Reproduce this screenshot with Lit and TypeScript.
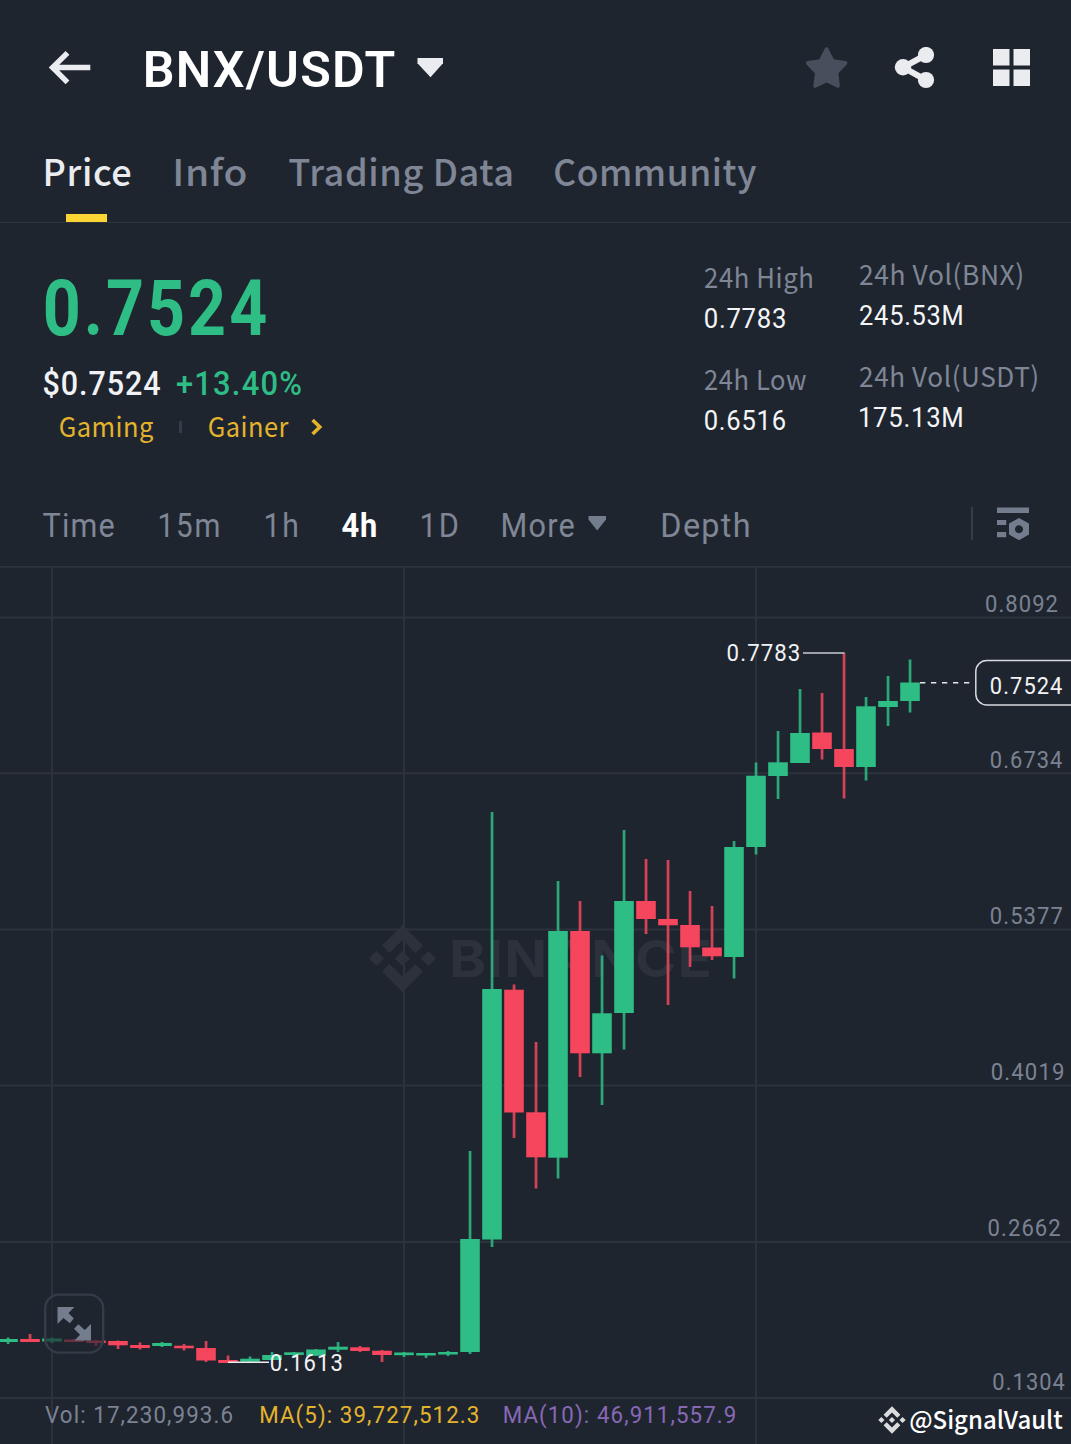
import { LitElement, html, svg, css } from "lit";
import { customElement, property } from "lit/decorators.js";

const FONT = 'Roboto, "Noto Sans", sans-serif';
const HUMANIST = '"Noto Sans CJK SC", "Noto Sans", sans-serif';
const pen = document.createElement("canvas").getContext("2d") as any;

/** Ink extent of a string: distance left of the origin, and full ink width. */
function inkOf(text: string, size: number, weight: number, spacing: number, family = FONT) {
  /* measured at ten times the size, for sub-pixel precision */
  pen.font = `${weight} ${size * 10}px ${family}`;
  pen.letterSpacing = `${spacing * 10}px`;
  const m = pen.measureText(text);
  return {
    left: m.actualBoundingBoxLeft / 10,
    width: (m.actualBoundingBoxLeft + m.actualBoundingBoxRight) / 10,
  };
}

/** A word whose ink spans the given width, less a hair of antialiasing at each side. */
@customElement("fit-text")
class FitText extends LitElement {
  @property() text = "";
  @property() family = FONT;
  @property({ type: Number }) w = 0;
  @property({ type: Number }) size = 28;
  @property({ type: Number }) weight = 400;
  @property({ type: Number }) spacing = 0;
  @property({ type: Number }) rise = 0;

  static styles = css`
    :host { display: flex; flex: none; white-space: pre; }
    .ink { display: block; flex: none; transform-origin: 0 50%; }
  `;

  render() {
    const i = inkOf(this.text, this.size, this.weight, this.spacing, this.family);
    const k = (this.w - 1.5) / i.width;
    return html`<style>:host{width:${this.w}px}</style><span
      class="ink"
      style="font-family:${this.family};font-size:${this.size}px;font-weight:${this.weight};letter-spacing:${this.spacing}px;transform:translate(${i.left * k + 0.9}px,${-this.rise}px) scaleX(${k})"
      >${this.text}</span>`;
  }
}

type Candle = [number, number, number, number, number, 0 | 1];

/* x, high, body top, body bottom, low, rising */
const CANDLES: Candle[] = [
  [8, 1337.5, 1339, 1342, 1344, 1],
  [30, 1334, 1339, 1342, 1342, 0],
  [52, 1337.5, 1338.5, 1341.5, 1343, 1],
  [74, 1339, 1339.5, 1342, 1342, 0],
  [96, 1340, 1340.5, 1343, 1346, 0],
  [118, 1340.5, 1341, 1345.3, 1349, 0],
  [140, 1342.5, 1345, 1348, 1349.5, 0],
  [162, 1342, 1343, 1346, 1347, 1],
  [184, 1344, 1345.7, 1348.3, 1350.5, 0],
  [206, 1341, 1348, 1360.5, 1362, 0],
  [228, 1355.5, 1360, 1363, 1363, 0],
  [250, 1356.5, 1358.7, 1361.7, 1363, 1],
  [272, 1352, 1355, 1360, 1360, 1],
  [294, 1352, 1352.3, 1355, 1358, 1],
  [316, 1349, 1349.5, 1355.7, 1356, 1],
  [338, 1342, 1346.7, 1349.7, 1352, 1],
  [360, 1346, 1347.3, 1351, 1352, 0],
  [382, 1350, 1350.7, 1355, 1362, 0],
  [404, 1352, 1352.5, 1355.2, 1357, 1],
  [426, 1353, 1353, 1355.5, 1358, 1],
  [448, 1351, 1352, 1354.5, 1356, 1],
  [470, 1151, 1239, 1352, 1354, 1],
  [492, 812, 989, 1239.5, 1247, 1],
  [514, 984.5, 989.7, 1112.5, 1138, 0],
  [536, 1042, 1112.3, 1157.3, 1188.5, 0],
  [558, 881, 931, 1157.7, 1178.5, 1],
  [580, 901, 931, 1053.3, 1077, 0],
  [602, 955.5, 1013.3, 1053.3, 1105, 1],
  [624, 830, 901, 1013, 1049.5, 1],
  [646, 859, 901, 919, 934, 0],
  [668, 860, 919, 925.3, 1005, 0],
  [690, 891, 925, 947.3, 967, 0],
  [712, 906, 947.5, 956.3, 960, 0],
  [734, 841, 847, 957, 978.5, 1],
  [756, 762.5, 775.7, 847, 854.5, 1],
  [778, 731, 762.3, 776, 799, 1],
  [800, 689, 733, 763, 763, 1],
  [822, 693, 732.5, 749, 759.5, 0],
  [844, 653, 749, 767, 798.5, 0],
  [866, 697, 706.3, 767, 780.5, 1],
  [888, 676, 701, 707, 726, 1],
  [910, 659.5, 682.5, 701, 712.5, 1],
];

const AXIS: [string, number, number, number][] = [
  ["0.8092", 986.2, 1057.2, 612],
  ["0.6734", 991, 1062, 768],
  ["0.5377", 991, 1062, 924],
  ["0.4019", 992, 1063, 1080],
  ["0.2662", 988.7, 1060, 1236],
  ["0.1304", 993.5, 1064.5, 1390],
];

const DIAMOND =
  "M16.624 13.9202l2.7175 2.7154-7.353 7.353-7.353-7.352 2.7175-2.7164 4.6355 4.6595 4.6356-4.6595zm4.6366-4.6366L24 12l-2.7154 2.7164L18.5682 12l2.6924-2.7164zm-9.272.001l2.7163 2.6914-2.7164 2.7174v-.001L9.2721 12l2.7164-2.7154zm-9.2722-.001L5.4088 12l-2.6914 2.6924L0 12l2.7164-2.7164zM11.9885.0115l7.353 7.329-2.7174 2.7154-4.6356-4.6356-4.6355 4.6595-2.7174-2.7154 7.353-7.353z";

function label(text: string, x0: number, x1: number, y: number, cls: string, size = 24.5, weight = 400, spacing = 1.2, family = FONT) {
  const i = inkOf(text, size, weight, spacing, family);
  const k = (x1 - x0) / i.width;
  return svg`<text class=${cls} font-size=${size} font-weight=${weight} letter-spacing=${spacing}
    transform="translate(${x0 + i.left * k} ${y}) scale(${k} 1)">${text}</text>`;
}

@customElement("candle-chart")
class CandleChart extends LitElement {
  static styles = css`
    :host { display: block; }
    svg { display: block; width: 1071px; height: 878px; font-family: Roboto, "Noto Sans", sans-serif; }
    .grid { stroke: #2d333d; stroke-width: 2; }
    .up { fill: #2ebd85; }
    .down { fill: #f6465d; }
    .wick { opacity: 0.85; }
    .muted { fill: #7b8292; }
    .light { fill: #f1f2f5; }
    .gold { fill: #e3b32e; }
    .violet { fill: #8668b5; }
    .mark { fill: #2c313c; }
    .brand { fill: #2c313c; font-family: Inter, sans-serif; }
    .credit { fill: #fff; font-family: "Noto Sans CJK SC", sans-serif; }
  `;

  render() {
    return html`<svg viewBox="0 566 1071 878">
      <g class="grid">
        <path d="M0 566.7H1071" />
        ${[52, 404, 756].map((x) => svg`<path d="M${x} 568V1444" />`)}
        ${[617.5, 773.3, 929.5, 1085.5, 1242, 1398].map((y) => svg`<path d="M0 ${y}H1071" />`)}
      </g>
      <path class="mark" transform="translate(369 925) scale(2.79)" d=${DIAMOND} />
      ${label("BINANCE", 452.5, 709.5, 977, "brand", 51, 700, 1, "Inter, sans-serif")}
      ${CANDLES.map(([x, h, t, b, l, up]) => svg`<g class=${up ? "up" : "down"}>
        <rect class="wick" x=${x - 1.3} y=${h} width="2.7" height=${l - h} />
        <rect x=${x - 9.8} y=${t} width="19.6" height=${b - t} />
      </g>`)}
      <path d="M803 653H844.5" stroke="#c9ccd2" stroke-width="1.7" />
      ${label("0.7783", 727.8, 799, 661, "light")}
      <path d="M228 1362.3H269" stroke="#eceef1" stroke-width="1.6" />
      ${label("0.1613", 271, 341.5, 1371, "light")}
      <path d="M920 682.8H972" stroke="#e4e6ea" stroke-width="1.5" stroke-dasharray="5.3 5.7" />
      <rect x="975.8" y="660.5" width="110" height="44.5" rx="11" fill="#1f252f" stroke="#d7dade" stroke-width="1.5" />
      ${label("0.7524", 991, 1062, 694, "light")}
      ${AXIS.map(([t, a, b, y]) => label(t, a, b, y, "muted"))}

      <rect x="45.2" y="1294.6" width="58" height="58" rx="14" fill="#1f252f" fill-opacity="0.65" stroke="#353b47" stroke-width="2.4" />
      <g fill="#747d8d">
        <path d="M57.5 1307H74.5L68.5 1313 73.8 1318.6 69.8 1323.3 63.4 1318 57.5 1324Z" />
        <path d="M91 1340.5H74.6L80 1334.8 74 1328.8 78.4 1324.2 84.8 1330 91 1324Z" />
      </g>
      ${label("Vol: 17,230,993.6", 45.3, 232, 1423, "muted")}
      ${label("MA(5): 39,727,512.3", 261, 478, 1423, "gold")}
      ${label("MA(10): 46,911,557.9", 504.5, 735, 1423, "violet")}
      <path transform="translate(878.3 1406.3) scale(1.14)" fill="#dcdcdc" d=${DIAMOND} />
      ${label("@SignalVault", 910.5, 1062.5, 1428.7, "credit", 24.3, 500, 0, HUMANIST)}
    </svg>`;
  }
}

/* label, ink width, space before it */
const TABS: [string, number, number][] = [
  ["Price", 86, 0],
  ["Info", 71.5, 44],
  ["Trading Data", 224, 41.5],
  ["Community", 202.5, 42.5],
];

const STATS = [
  { cls: "first", rows: [["24h High", 108.5, "0.7783", 81.5], ["24h Low", 102.5, "0.6516", 81.5]] },
  { cls: "second", rows: [["24h Vol(BNX)", 163.5, "245.53M", 103.5], ["24h Vol(USDT)", 178.5, "175.13M", 103.5]] },
] as { cls: string; rows: [string, number, string, number][] }[];

@customElement("app-root")
class AppRoot extends LitElement {
  static styles = css`
    :host {
      display: block; width: 1071px; height: 1444px; overflow: hidden;
      background: #1f252f; color: #7f8696;
      font-family: Roboto, "Noto Sans", sans-serif;
    }
    svg { display: block; flex: none; }
    .header { display: flex; align-items: center; height: 136px; padding-left: 48px; box-sizing: border-box; }
    .title { margin-left: 53.5px; margin-top: 4px; line-height: 60px; color: #fff; }
    .caret { margin-left: 21.5px; }
    .actions { display: flex; margin-left: auto; gap: 46px; padding-right: 40px; }
    .tabs { display: flex; height: 86px; padding-left: 44.5px; line-height: 74px; border-bottom: 1px solid #2d333d; }
    .tab { display: flex; flex-direction: column; align-items: center; justify-content: space-between; }
    .tab.on { color: #eaecef; }
    .tab.on::after { content: ""; width: 41px; height: 8.5px; margin-right: 2px; background: #fcd535; }
    .summary { display: flex; height: 274px; }
    .quote { width: 659px; padding-left: 43px; box-sizing: border-box; }
    .last { line-height: 84px; padding: 44px 0 0 1px; color: #2ebd85; }
    .change { display: flex; gap: 15.5px; line-height: 44px; margin-top: 10.5px; color: #f1f2f5; }
    .rise { color: #2ebd85; }
    .tags { display: flex; align-items: center; line-height: 40px; margin-top: 2px; padding-left: 16px; color: #e3b32e; }
    .bar { width: 3px; height: 12px; margin: -2px 26px 0 25px; background: #353b47; }
    .more { margin: -2px 0 0 21px; }
    .stats { display: flex; flex-direction: column; gap: 22px; line-height: 40px; padding-top: 35.5px; margin-left: 45px; }
    .stats.second { padding-top: 32.5px; margin-left: 46px; width: 180px; }
    .stats.first { width: 109px; }
    .value { color: #f4f5f7; }
    .intervals { display: flex; align-items: center; height: 69px; padding: 0 42px 0 42px; line-height: 46px; }
    .intervals > * { margin-top: -11px; }
    .intervals > svg, .intervals > .divider { margin-top: -16px; }
    .active { color: #fff; }
    .divider { width: 2px; height: 33px; margin-left: auto; margin-right: 24px; background: #353b47; }
  `;

  render() {
    return html`
      <div class="header">
        <svg width="43" height="36" viewBox="48 50 43 36" fill="none" stroke="#eaecef" stroke-width="5.4">
          <path d="M90.3 67.5H53M67.5 52.8 52.6 67.5 67.5 82.4" />
        </svg>
        <fit-text class="title" text="BNX/USDT" w="250.5" size="49.5" weight="600" spacing="1.2"></fit-text>
        <svg class="caret" width="26" height="22" viewBox="416 57 26 22"><path fill="#eaecef" d="M416.5 58H442V63.3L429.5 77.3 416.5 63.3Z" /></svg>
        <div class="actions">
          <svg width="42" height="42" viewBox="805.7 47 42 42">
            <path fill="#474f5d" stroke="#474f5d" stroke-width="4" stroke-linejoin="round"
              d="M826.3 49.3 832.2 61.2 845 63 836 72.5 837.5 85.8 826.3 80.3 815 85.8 816.7 72.5 807.7 63 820.4 61.2Z" />
          </svg>
          <svg width="41" height="42" viewBox="894 47 41 42" fill="#eaecef">
            <path d="M926 55 903 67.3 926 80" fill="none" stroke="#eaecef" stroke-width="6" />
            <circle cx="903" cy="67.3" r="8.2" /><circle cx="926" cy="55" r="8.1" /><circle cx="926" cy="80" r="8.1" />
          </svg>
          <svg width="50" height="42" viewBox="981 47 50 42" fill="#eaecef">
            <path d="M993 49h16.5v16.5H993zM1013.5 49H1030v16.5h-16.5zM993 69.5h16.5V86H993zM1013.5 69.5H1030V86h-16.5z" />
          </svg>
        </div>
      </div>

      <div class="tabs">
        ${TABS.map(([t, w, before], i) => html`<div class="tab ${i ? "" : "on"}" style="margin-left:${before}px">
          <fit-text text=${t} w=${w} size="36.5" weight="500" spacing="0.6" rise="1.9" family=${HUMANIST}></fit-text>
        </div>`)}
      </div>

      <div class="summary">
        <div class="quote">
          <fit-text class="last" text="0.7524" w="222" size="77.5" weight="700" spacing="3.5"></fit-text>
          <div class="change">
            <fit-text text="$0.7524" w="117.5" size="33.5" weight="500" spacing="1"></fit-text>
            <fit-text class="rise" text="+13.40%" w="125.5" size="32.5" weight="500" spacing="1.3"></fit-text>
          </div>
          <div class="tags">
            <fit-text text="Gaming" w="95" size="27.5" spacing="0.5" rise="3" family=${HUMANIST}></fit-text>
            <i class="bar"></i>
            <fit-text text="Gainer" w="81" size="27.5" spacing="0.5" rise="3" family=${HUMANIST}></fit-text>
            <svg class="more" width="14" height="18" viewBox="310 418 14 18" fill="none" stroke="#e3b32e" stroke-width="3.6"><path d="M312.6 420 319.8 427 312.6 434" /></svg>
          </div>
        </div>
        ${STATS.map((col) => html`<div class="stats ${col.cls}">
          ${col.rows.map(([name, nw, value, vw]) => html`<div>
            <fit-text text=${name} w=${nw} size="27.5" spacing="0.6" rise="3" family=${HUMANIST}></fit-text>
            <fit-text class="value" text=${value} w=${vw} size="27.7" spacing="0.8"></fit-text>
          </div>`)}
        </div>`)}
      </div>

      <div class="intervals">
        <fit-text text="Time" w="72.5" size="32.5" spacing="1.3"></fit-text>
        <fit-text style="margin-left:44.5px" text="15m" w="60" size="32.5" spacing="2"></fit-text>
        <fit-text style="margin-left:46px" text="1h" w="32.5" size="32.5" spacing="2"></fit-text>
        <fit-text class="active" style="margin-left:43px" text="4h" w="35.5" size="32.5" weight="700" spacing="1"></fit-text>
        <fit-text style="margin-left:44.5px" text="1D" w="37" size="32.5" spacing="2"></fit-text>
        <fit-text style="margin-left:44px" text="More" w="72.5" size="32.5" spacing="1.3"></fit-text>
        <svg style="margin-left:13.5px" width="18" height="18" viewBox="587 515 18 18"><path fill="#747d8d" d="M587.5 516H605V519.5L596.2 530.5 587.5 519.5Z" /></svg>
        <fit-text style="margin-left:56px" text="Depth" w="87" size="32.5" spacing="1.3"></fit-text>
        <i class="divider"></i>
        <svg width="32" height="34" viewBox="997 507 32 34" fill="#747d8d">
          <path d="M997 507.5h32v5.5h-32zM997 520h9.2v5h-9.2zM997 532h9.2v5.2h-9.2z" />
          <path fill-rule="evenodd" d="M1019 518 1029 523.5V534.5L1019 540.2 1009 534.5V523.5ZM1019 525.2a4 4 0 1 0 .01 0Z" />
        </svg>
      </div>
      <candle-chart></candle-chart>
    `;
  }
}
